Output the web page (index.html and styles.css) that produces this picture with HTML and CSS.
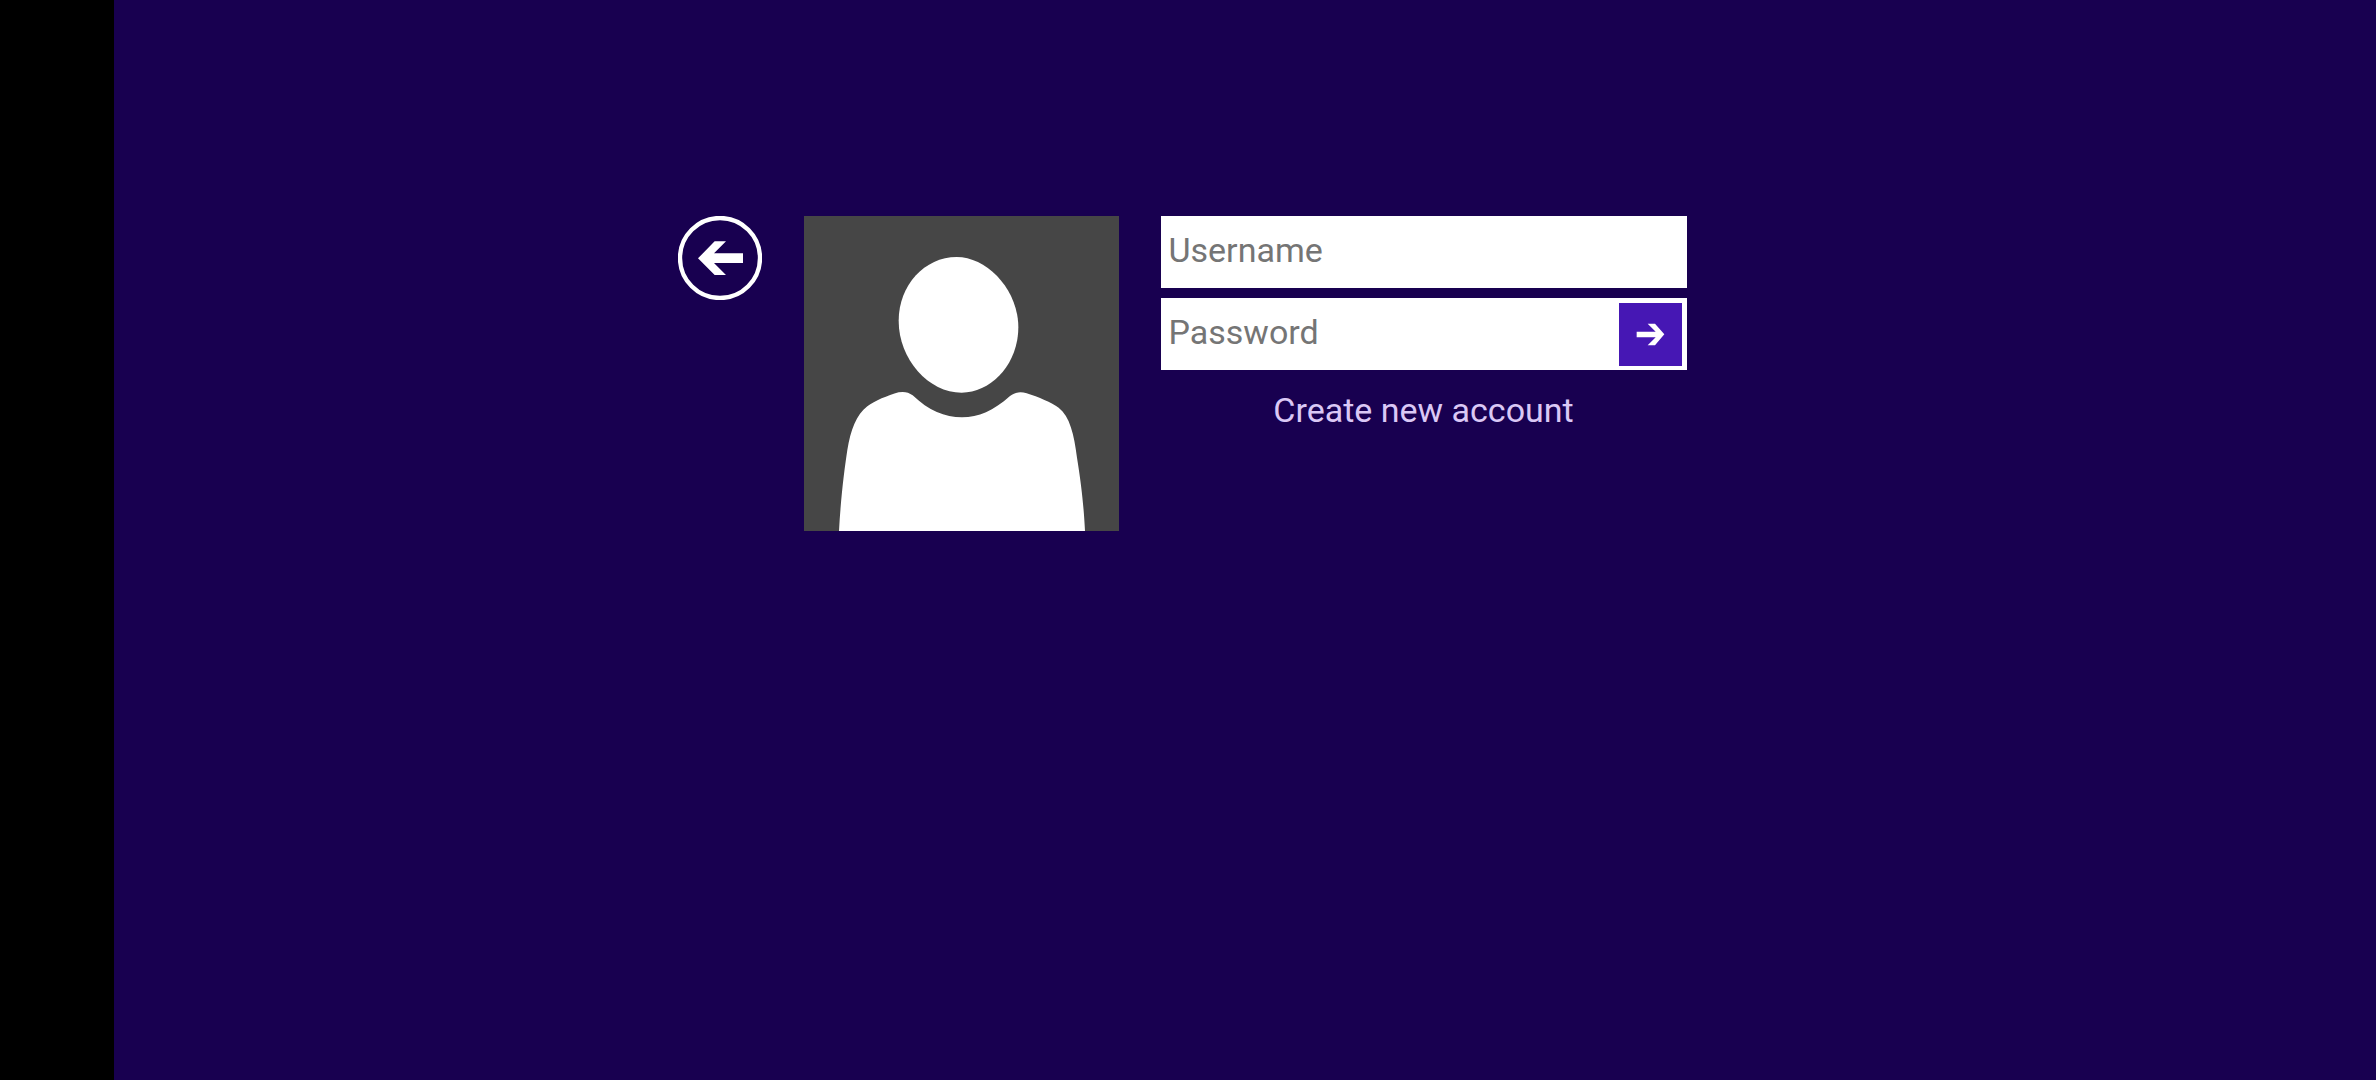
FILE: index.html
```html
<!DOCTYPE html>
<html lang="en">
<head>
<meta charset="utf-8">
<meta name="viewport" content="width=device-width, initial-scale=1">
<title>Sign in</title>
<link rel="stylesheet" href="styles.css">
</head>
<body class="screen">
<main class="login">
  <button class="back" type="button" aria-label="Back">
    <svg class="icon" viewBox="0 0 252 252" aria-hidden="true">
      <circle cx="126" cy="126" r="120" fill="none" stroke="#fff" stroke-width="13"/>
      <path d="M60 127 110 76H144L108 112H195V141H108L144 177H110Z" fill="#fff"/>
    </svg>
  </button>
  <svg class="avatar" viewBox="0 0 945 945" role="img" aria-label="User picture">
    <path d="M458 123C550 123 643 222 643 334C643 443 563 530 473 530C374 530 284 430 284 314C284 208 362 123 458 123Z" fill="#fff"/>
    <path d="M105 945C110 850 121 760 130 702C140 642 157 596 190 571C212 554 251 539 284 529Q308 524 326 538C374 584 422 604 474 604C524 604 568 584 618 540C634 528 650 526 668 532C703 543 743 560 764 575C798 602 810 655 819 725C833 812 839 870 843 945Z" fill="#fff"/>
  </svg>
  <form class="form">
    <input class="field" type="text" placeholder="Username" aria-label="Username">
    <div class="password">
      <input class="field" type="password" placeholder="Password" aria-label="Password">
      <button class="submit" type="submit" aria-label="Sign in">
        <svg class="icon" viewBox="0 0 189 189" aria-hidden="true">
          <path d="M53 86H110L86 62H108L136 94 108 127H86L110 103H53Z" fill="#fff"/>
        </svg>
      </button>
    </div>
    <a class="create" href="#">Create new account</a>
  </form>
</main>
</body>
</html>
```
FILE: styles.css
```css
* {
  box-sizing: border-box;
}

.screen {
  margin: 0;
  min-height: 100vh;
  border-left: 114px solid #000;
  background: #180050;
  font-family: Roboto, "Liberation Sans", sans-serif;
  font-size: 34px;
  line-height: 40px;
}

/* The right padding balances the back button, so picture and form sit centred. */
.login {
  display: flex;
  justify-content: center;
  align-items: flex-start;
  gap: 42px;
  padding: 216px 126px 0 0;
}

.back,
.submit {
  flex: none;
  padding: 0;
  border: 0;
  background: none;
  cursor: pointer;
}

.back {
  width: 84px;
  height: 84px;
  border-radius: 50%;
}

.icon {
  display: block;
  width: 100%;
}

.avatar {
  flex: none;
  width: 315px;
  background: #464646;
}

.form {
  display: flex;
  flex-direction: column;
  gap: 10px;
  width: 526px;
}

.field {
  width: 100%;
  min-width: 0;
  height: 72px;
  padding: 12px 8px 16px;
  border: 0;
  border-radius: 0;
  background: #fff;
  color: #222;
  font: inherit;
}

.field::placeholder {
  color: #757575;
  opacity: 1;
}

.password {
  display: flex;
  align-items: center;
  padding-right: 5px;
  background: #fff;
}

.submit {
  width: 63px;
  height: 63px;
  background: #4617b4;
}

.create {
  align-self: center;
  margin-top: 10px;
  color: #dac8f5;
  text-decoration: none;
}
```
